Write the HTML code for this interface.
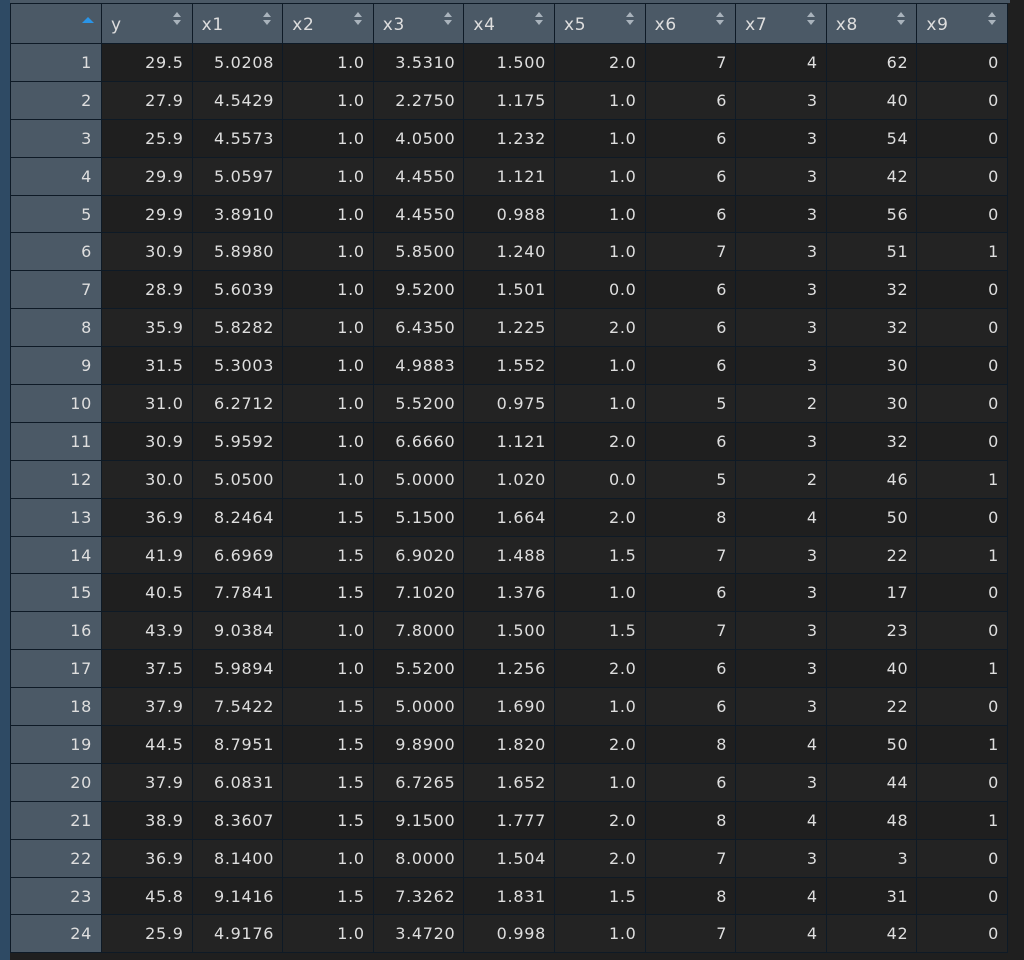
<!DOCTYPE html>
<html><head><style>
html,body{margin:0;padding:0;width:1024px;height:960px;overflow:hidden;background:#1f1f1f;}
.strip{position:absolute;left:0;top:0;width:10px;height:960px;background:#2e4a64;}
.top{position:absolute;left:10px;top:0;width:1000px;height:3px;background:#4b5966;}
table{position:absolute;left:10px;top:3px;border-collapse:separate;border-spacing:1px;background:#0e1a26;table-layout:fixed;width:998px;}
td,th{font-family:"DejaVu Sans","Liberation Sans",sans-serif;font-size:16px;letter-spacing:0.7px;color:#dedede;padding:0;overflow:hidden;white-space:nowrap;}
th{height:39px;background:#4b5966;font-weight:normal;text-align:left;position:relative;font-size:17px;}
th span{position:absolute;left:9px;top:11px;}
th i{position:absolute;right:10px;top:8px;width:9px;height:15px;}
th i:before{content:"";position:absolute;left:0;top:0;border-left:4.5px solid transparent;border-right:4.5px solid transparent;border-bottom:5px solid #a9b3bc;}
th i:after{content:"";position:absolute;left:0;top:8px;border-left:4.5px solid transparent;border-right:4.5px solid transparent;border-top:5px solid #a9b3bc;}
th.rn b{position:absolute;right:7px;top:13px;border-left:6px solid transparent;border-right:6px solid transparent;border-bottom:6px solid #2a95e8;}
td{height:36.9px;background:#1f1f1f;text-align:right;padding-right:8px;}
td.r{background:#4b5966;padding-right:9px;}
tr:nth-child(odd) td:not(.r){background:#232323;}
</style></head><body>
<div class="strip"></div><div class="top"></div>
<table>
<colgroup><col style="width:90px"><col span="10"></colgroup>
<tr><th class="rn"><b></b></th><th><span>y</span><i></i></th><th><span>x1</span><i></i></th><th><span>x2</span><i></i></th><th><span>x3</span><i></i></th><th><span>x4</span><i></i></th><th><span>x5</span><i></i></th><th><span>x6</span><i></i></th><th><span>x7</span><i></i></th><th><span>x8</span><i></i></th><th><span>x9</span><i></i></th></tr>
<tr><td class="r">1</td><td>29.5</td><td>5.0208</td><td>1.0</td><td>3.5310</td><td>1.500</td><td>2.0</td><td>7</td><td>4</td><td>62</td><td>0</td></tr>
<tr><td class="r">2</td><td>27.9</td><td>4.5429</td><td>1.0</td><td>2.2750</td><td>1.175</td><td>1.0</td><td>6</td><td>3</td><td>40</td><td>0</td></tr>
<tr><td class="r">3</td><td>25.9</td><td>4.5573</td><td>1.0</td><td>4.0500</td><td>1.232</td><td>1.0</td><td>6</td><td>3</td><td>54</td><td>0</td></tr>
<tr><td class="r">4</td><td>29.9</td><td>5.0597</td><td>1.0</td><td>4.4550</td><td>1.121</td><td>1.0</td><td>6</td><td>3</td><td>42</td><td>0</td></tr>
<tr><td class="r">5</td><td>29.9</td><td>3.8910</td><td>1.0</td><td>4.4550</td><td>0.988</td><td>1.0</td><td>6</td><td>3</td><td>56</td><td>0</td></tr>
<tr><td class="r">6</td><td>30.9</td><td>5.8980</td><td>1.0</td><td>5.8500</td><td>1.240</td><td>1.0</td><td>7</td><td>3</td><td>51</td><td>1</td></tr>
<tr><td class="r">7</td><td>28.9</td><td>5.6039</td><td>1.0</td><td>9.5200</td><td>1.501</td><td>0.0</td><td>6</td><td>3</td><td>32</td><td>0</td></tr>
<tr><td class="r">8</td><td>35.9</td><td>5.8282</td><td>1.0</td><td>6.4350</td><td>1.225</td><td>2.0</td><td>6</td><td>3</td><td>32</td><td>0</td></tr>
<tr><td class="r">9</td><td>31.5</td><td>5.3003</td><td>1.0</td><td>4.9883</td><td>1.552</td><td>1.0</td><td>6</td><td>3</td><td>30</td><td>0</td></tr>
<tr><td class="r">10</td><td>31.0</td><td>6.2712</td><td>1.0</td><td>5.5200</td><td>0.975</td><td>1.0</td><td>5</td><td>2</td><td>30</td><td>0</td></tr>
<tr><td class="r">11</td><td>30.9</td><td>5.9592</td><td>1.0</td><td>6.6660</td><td>1.121</td><td>2.0</td><td>6</td><td>3</td><td>32</td><td>0</td></tr>
<tr><td class="r">12</td><td>30.0</td><td>5.0500</td><td>1.0</td><td>5.0000</td><td>1.020</td><td>0.0</td><td>5</td><td>2</td><td>46</td><td>1</td></tr>
<tr><td class="r">13</td><td>36.9</td><td>8.2464</td><td>1.5</td><td>5.1500</td><td>1.664</td><td>2.0</td><td>8</td><td>4</td><td>50</td><td>0</td></tr>
<tr><td class="r">14</td><td>41.9</td><td>6.6969</td><td>1.5</td><td>6.9020</td><td>1.488</td><td>1.5</td><td>7</td><td>3</td><td>22</td><td>1</td></tr>
<tr><td class="r">15</td><td>40.5</td><td>7.7841</td><td>1.5</td><td>7.1020</td><td>1.376</td><td>1.0</td><td>6</td><td>3</td><td>17</td><td>0</td></tr>
<tr><td class="r">16</td><td>43.9</td><td>9.0384</td><td>1.0</td><td>7.8000</td><td>1.500</td><td>1.5</td><td>7</td><td>3</td><td>23</td><td>0</td></tr>
<tr><td class="r">17</td><td>37.5</td><td>5.9894</td><td>1.0</td><td>5.5200</td><td>1.256</td><td>2.0</td><td>6</td><td>3</td><td>40</td><td>1</td></tr>
<tr><td class="r">18</td><td>37.9</td><td>7.5422</td><td>1.5</td><td>5.0000</td><td>1.690</td><td>1.0</td><td>6</td><td>3</td><td>22</td><td>0</td></tr>
<tr><td class="r">19</td><td>44.5</td><td>8.7951</td><td>1.5</td><td>9.8900</td><td>1.820</td><td>2.0</td><td>8</td><td>4</td><td>50</td><td>1</td></tr>
<tr><td class="r">20</td><td>37.9</td><td>6.0831</td><td>1.5</td><td>6.7265</td><td>1.652</td><td>1.0</td><td>6</td><td>3</td><td>44</td><td>0</td></tr>
<tr><td class="r">21</td><td>38.9</td><td>8.3607</td><td>1.5</td><td>9.1500</td><td>1.777</td><td>2.0</td><td>8</td><td>4</td><td>48</td><td>1</td></tr>
<tr><td class="r">22</td><td>36.9</td><td>8.1400</td><td>1.0</td><td>8.0000</td><td>1.504</td><td>2.0</td><td>7</td><td>3</td><td>3</td><td>0</td></tr>
<tr><td class="r">23</td><td>45.8</td><td>9.1416</td><td>1.5</td><td>7.3262</td><td>1.831</td><td>1.5</td><td>8</td><td>4</td><td>31</td><td>0</td></tr>
<tr><td class="r">24</td><td>25.9</td><td>4.9176</td><td>1.0</td><td>3.4720</td><td>0.998</td><td>1.0</td><td>7</td><td>4</td><td>42</td><td>0</td></tr>
</table>
</body></html>
